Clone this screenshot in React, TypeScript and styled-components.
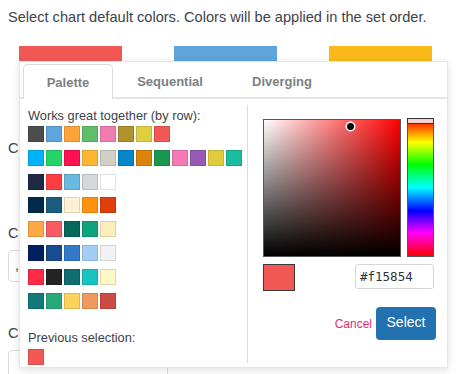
import React from 'react';
import styled, { createGlobalStyle } from 'styled-components';

const GlobalStyle = createGlobalStyle`
  body {
    margin: 0;
    background: #ffffff;
    font-family: "Liberation Sans", Arial, sans-serif;
    color: #3c434a;
  }
`;

const Page = styled.div`
  position: relative;
  padding: 8px;
  height: 374px;
  box-sizing: border-box;
  overflow: hidden;
`;

const Intro = styled.p`
  margin: 0;
  font-size: 14.6px;
  line-height: 18px;
  color: #3c434a;
`;

const DefaultRow = styled.div`
  display: flex;
  gap: 52px;
  margin: 20px 0 0 11px;
`;

const DefaultSwatch = styled.div<{ $color: string }>`
  width: 103px;
  height: 24px;
  background: ${({ $color }) => $color};
`;

const Field = styled.div<{ $top: number }>`
  margin-top: ${({ $top }) => $top}px;
  display: flex;
  flex-direction: column;
  gap: 8px;
`;

const FieldLabel = styled.div`
  font-size: 14.6px;
  line-height: 18px;
  display: flex;
  justify-content: space-between;
`;

const FieldInput = styled.div`
  width: 160px;
  height: 32px;
  border: 1px solid #dcdcde;
  border-radius: 4px;
  font-size: 14px;
  padding: 6px 6px;
  box-sizing: border-box;
`;

const Popover = styled.div`
  position: absolute;
  left: 19px;
  top: 61px;
  width: 429px;
  height: 307px;
  background: #fff;
  border: 1px solid #e6e6e6;
  box-sizing: border-box;
  box-shadow: 0 2px 8px rgba(0, 0, 0, 0.12);
  display: flex;
  flex-direction: column;
`;

const TabBar = styled.div`
  display: flex;
  height: 37px;
  padding: 2px 0 0 3px;
  border-bottom: 2px solid #e2e4e7;
  box-sizing: border-box;
`;

const Tab = styled.div<{ $active?: boolean; $width: number }>`
  width: ${({ $width }) => $width}px;
  display: flex;
  align-items: center;
  justify-content: center;
  font-size: 13px;
  font-weight: 700;
  color: #7b7f84;
  border: 1px solid ${({ $active }) => ($active ? '#dcdcde' : 'transparent')};
  border-bottom: none;
  border-radius: 5px 5px 0 0;
  background: ${({ $active }) => ($active ? '#fff' : 'transparent')};
  margin-bottom: ${({ $active }) => ($active ? '-2px' : '0')};
`;

const Body = styled.div`
  flex: 1;
  display: flex;
`;

const PalettePanel = styled.div`
  width: 219px;
  padding: 9px 0 0 8px;
`;

const Heading = styled.div`
  font-size: 12.8px;
  line-height: 16px;
  color: #3c434a;
  margin-bottom: 2px;
`;

const PaletteRows = styled.div`
  display: flex;
  flex-direction: column;
  gap: 7.8px;
`;

const PaletteRow = styled.div`
  display: flex;
  gap: 2px;
`;

const Swatch = styled.div<{ $color: string }>`
  width: 16px;
  height: 16px;
  box-sizing: border-box;
  border: 1px solid rgba(0, 0, 0, 0.12);
  background: ${({ $color }) => $color};
`;

const Previous = styled.div`
  margin-top: 21px;
  display: flex;
  flex-direction: column;
  gap: 1px;
`;

const Divider = styled.div`
  width: 1px;
  background: #dcdcde;
  margin: 6px 0 4px;
`;

const PickerPanel = styled.div`
  flex: 1;
  padding: 20px 0 0 15px;
  display: flex;
  flex-direction: column;
`;

const PickerTop = styled.div`
  display: flex;
  gap: 6px;
`;

const Saturation = styled.div`
  position: relative;
  width: 138px;
  height: 138px;
  box-sizing: border-box;
  border: 1px solid #555;
  background:
    linear-gradient(to bottom, rgba(0, 0, 0, 0), #000),
    linear-gradient(to right, #fff, rgba(255, 255, 255, 0)),
    #ff0000;
`;

const Pointer = styled.div`
  position: absolute;
  left: 83px;
  top: 3px;
  width: 7px;
  height: 7px;
  border-radius: 50%;
  background: #000;
  box-shadow: 0 0 0 1.5px #fff;
`;

const Hue = styled.div`
  position: relative;
  width: 27px;
  height: 139px;
  margin-top: -1px;
  box-sizing: border-box;
  border: 1px solid #555;
  background: linear-gradient(
    to bottom,
    #ff0000 0%,
    #ffff00 17%,
    #00ff00 33%,
    #00ffff 50%,
    #0000ff 67%,
    #ff00ff 83%,
    #ff0000 100%
  );
`;

const HueHandle = styled.div`
  position: absolute;
  left: -1px;
  right: -1px;
  top: -1px;
  height: 4px;
  background: #f3d3d3;
  border: 1px solid #333;
`;

const PickerBottom = styled.div`
  display: flex;
  justify-content: space-between;
  align-items: flex-start;
  margin-top: 7px;
  padding-right: 13px;
`;

const Preview = styled.div`
  width: 32px;
  height: 27px;
  box-sizing: border-box;
  border: 1px solid #3a3a3a;
  background: #f15854;
`;

const HexInput = styled.div`
  width: 79px;
  height: 25px;
  box-sizing: border-box;
  border: 1px solid #d6d6d6;
  border-radius: 3px;
  font-family: "DejaVu Sans Mono", "Liberation Mono", monospace;
  font-size: 12.5px;
  line-height: 23px;
  padding-left: 4px;
  color: #2c3338;
`;

const Actions = styled.div`
  display: flex;
  justify-content: flex-end;
  align-items: center;
  gap: 4px;
  margin-top: 16px;
  padding-right: 11px;
`;

const CancelLink = styled.span`
  font-size: 12px;
  color: #e2306c;
  margin-top: 1px;
`;

const SelectButton = styled.button`
  width: 60px;
  height: 33px;
  border: none;
  border-radius: 4px;
  background: #2271b1;
  color: #fff;
  font-family: "Liberation Sans", Arial, sans-serif;
  font-size: 14px;
  padding: 0 0 4px;
`;

const palettes: string[][] = [
  ['#4d4d4d', '#5da5da', '#faa43a', '#60bd68', '#f17cb0', '#b2912f', '#decf3f', '#f15854'],
  ['#00b3f7', '#25d366', '#ff1053', '#fbb731', '#d1cfc7', '#0785c9', '#d98309', '#1a9850', '#f27bb5', '#9b59b6', '#e0cb3a', '#1abc9c'],
  ['#1f2a44', '#ff3e41', '#6ab9e1', '#d5d9dc', '#ffffff'],
  ['#012a4a', '#1c5d7e', '#fdf0d5', '#ff9110', '#e03e0b'],
  ['#fda746', '#f95b63', '#04695d', '#0ea37a', '#fcefba'],
  ['#002060', '#184b90', '#3279c7', '#a4cdf5', '#f0f2f5'],
  ['#ff2a48', '#242323', '#106d70', '#17c4c0', '#fef8c4'],
  ['#0f7a79', '#27a87b', '#fcd25b', '#ef9a5c', '#cc4b45'],
];

export default function App() {
  return (
    <>
      <GlobalStyle />
      <Page>
        <Intro>Select chart default colors. Colors will be applied in the set order.</Intro>
        <DefaultRow>
          <DefaultSwatch $color="#f15854" />
          <DefaultSwatch $color="#5da5da" />
          <DefaultSwatch $color="#fbb919" />
        </DefaultRow>

        <Field $top={69}>
          <FieldLabel>Chart font</FieldLabel>
        </Field>
        <Field $top={67}>
          <FieldLabel>Chart font size</FieldLabel>
          <FieldInput>,</FieldInput>
        </Field>
        <Field $top={42}>
          <FieldLabel>
            <span>Chart height</span>
            <span>s</span>
          </FieldLabel>
          <FieldInput />
        </Field>

        <Popover>
          <TabBar>
            <Tab $active $width={88}>Palette</Tab>
            <Tab $width={112}>Sequential</Tab>
            <Tab $width={108}>Diverging</Tab>
          </TabBar>
          <Body>
            <PalettePanel>
              <Heading>Works great together (by row):</Heading>
              <PaletteRows>
                {palettes.map((row, i) => (
                  <PaletteRow key={i}>
                    {row.map((c, j) => (
                      <Swatch key={j} $color={c} />
                    ))}
                  </PaletteRow>
                ))}
              </PaletteRows>
              <Previous>
                <Heading>Previous selection:</Heading>
                <Swatch $color="#f15854" />
              </Previous>
            </PalettePanel>
            <Divider />
            <PickerPanel>
              <PickerTop>
                <Saturation>
                  <Pointer />
                </Saturation>
                <Hue>
                  <HueHandle />
                </Hue>
              </PickerTop>
              <PickerBottom>
                <Preview />
                <HexInput>#f15854</HexInput>
              </PickerBottom>
              <Actions>
                <CancelLink>Cancel</CancelLink>
                <SelectButton>Select</SelectButton>
              </Actions>
            </PickerPanel>
          </Body>
        </Popover>
      </Page>
    </>
  );
}
